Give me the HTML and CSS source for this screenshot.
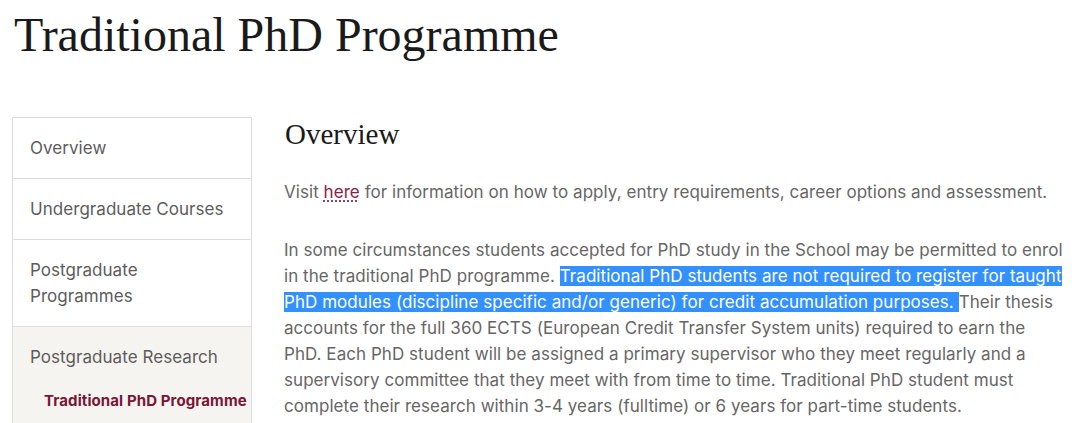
FILE: index.html
```html
<!DOCTYPE html>
<html lang="en">
<head>
<meta charset="utf-8">
<title>Traditional PhD Programme</title>
<link rel="stylesheet" href="styles.css">
</head>
<body>
<h1 class="page-title">Traditional PhD Programme</h1>
<div class="layout">
  <nav class="sidenav">
    <a class="nav-item">Overview</a>
    <a class="nav-item">Undergraduate Courses</a>
    <a class="nav-item">Postgraduate Programmes</a>
    <div class="nav-group">
      <a class="nav-item nav-active">Postgraduate Research</a>
      <a class="nav-sub">Traditional PhD Programme</a>
    </div>
  </nav>
  <main class="content">
    <h2 class="section-title">Overview</h2>
    <p class="para">Visit <a class="link">here</a> for information on how to apply, entry requirements, career options and assessment.</p>
    <p class="para">In some circumstances students accepted for PhD study in the School may be permitted to enrol in the traditional PhD programme. <span class="sel">Traditional PhD students are not required to register for taught PhD modules (discipline specific and/or generic) for credit accumulation purposes. </span>Their thesis accounts for the full 360 ECTS (European Credit Transfer System units) required to earn the PhD. Each PhD student will be assigned a primary supervisor who they meet regularly and a supervisory committee that they meet with from time to time. Traditional PhD student must complete their research within 3-4 years (fulltime) or 6 years for part-time students.</p>
  </main>
</div>
</body>
</html>
```
FILE: styles.css
```css
html, body {
  margin: 0;
  padding: 0;
  background: #ffffff;
}
body {
  font-family: Inter, "Liberation Sans", sans-serif;
  color: #666666;
  overflow: hidden;
}
.page-title {
  font-family: "Liberation Serif", serif;
  font-weight: normal;
  font-size: 48px;
  line-height: 60px;
  color: #1a1a1a;
  margin: 5px 0 0 14px;
}
.layout {
  display: flex;
  gap: 32px;
  margin-top: 52px;
  padding-left: 12px;
}
.sidenav {
  width: 238px;
  flex: none;
  border: 1px solid #dddddd;
  border-bottom: none;
  display: flex;
  flex-direction: column;
}
.nav-item {
  display: block;
  padding: 17px 12px 17px 17px;
  font-size: 17px;
  letter-spacing: 0.05px;
  line-height: 26px;
  color: #5c5c5c;
  border-bottom: 1px solid #dddddd;
}
.nav-group {
  background: #f6f4f1;
}
.nav-group .nav-item {
  border-bottom: none;
  padding-bottom: 10px;
}
.nav-sub {
  display: block;
  padding: 8px 0 20px 31px;
  font-size: 15px;
  letter-spacing: 0.1px;
  line-height: 26px;
  font-weight: 700;
  color: #7a1535;
  white-space: nowrap;
}
.content {
  width: 781px;
  flex: none;
}
.section-title {
  font-family: "Liberation Serif", serif;
  font-weight: normal;
  font-size: 29px;
  line-height: 34px;
  color: #1a1a1a;
  margin: 0 0 28px 1px;
}
.para {
  font-size: 17px;
  letter-spacing: 0.05px;
  line-height: 26px;
  margin: 0 0 32px 0;
}
.link {
  color: #8a1c48;
  text-decoration: underline dotted;
  text-underline-offset: 3px;
}
.sel {
  background: #3390ff;
  color: #ffffff;
}
```
